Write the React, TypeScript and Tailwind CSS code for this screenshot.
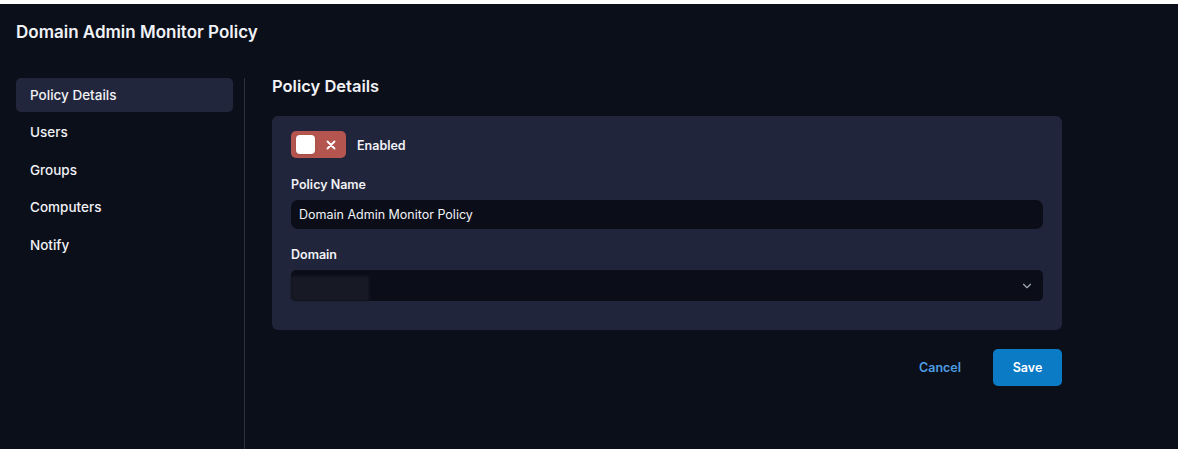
import { ChevronDown } from "lucide-react";

const navItems = ["Policy Details", "Users", "Groups", "Computers", "Notify"];

export default function App() {
  return (
    <div
      className="h-[449px] w-[1178px] overflow-hidden bg-white pt-[4px]"
      style={{ fontFamily: "Inter, 'Noto Sans', sans-serif" }}
    >
      <div className="flex h-[445px] flex-col bg-[#0b0f1a] text-[#f1f2f6]">
        {/* HEADER */}
        <h1 className="px-4 pt-[17px] text-[17px] font-semibold leading-[22px]">
          Domain Admin Monitor Policy
        </h1>

        <div className="mt-[35px] flex flex-1">
          {/* SIDEBAR */}
          <nav className="flex w-[245px] flex-col gap-[3.5px] border-r border-[#2e3240] pl-4 pr-[11px]">
            {navItems.map((item, idx) => (
              <div
                key={item}
                className={
                  "flex h-[34px] items-center rounded-[5px] px-[14px] text-[13.5px] font-medium " +
                  (idx === 0 ? "bg-[#22263c]" : "")
                }
              >
                {item}
              </div>
            ))}
          </nav>

          {/* MAIN */}
          <main className="w-[817px] pl-[27px]">
            <h2 className="text-[16.5px] font-semibold leading-[17px]">
              Policy Details
            </h2>

            <section className="mt-[21px] rounded-[6px] bg-[#21253b] px-[19px] pb-[29px] pt-[15px]">
              <div className="flex items-center gap-[11px]">
                <div className="flex h-[27px] w-[55px] items-center rounded-[5px] bg-[#b5554f] pl-[5px]">
                  <div className="h-[19px] w-[19px] rounded-[4px] bg-white shadow" />
                  <svg
                    className="ml-[11px]"
                    width="10"
                    height="10"
                    viewBox="0 0 10 10"
                    fill="none"
                    stroke="white"
                    strokeWidth="1.8"
                    strokeLinecap="round"
                  >
                    <path d="M1.5 1.5l7 7M8.5 1.5l-7 7" />
                  </svg>
                </div>
                <span className="pt-[3px] text-[12.5px] font-semibold">Enabled</span>
              </div>

              <label className="mt-[19px] block text-[12.5px] font-semibold leading-[15px]">
                Policy Name
              </label>
              <div className="mt-[8px] flex h-[29px] items-center rounded-[7px] bg-[#0b0e19] px-[8px] pt-[1px] text-[12.5px]">
                Domain Admin Monitor Policy
              </div>

              <label className="mt-[18px] block text-[12.5px] font-semibold leading-[15px]">
                Domain
              </label>
              <div className="mt-[8px] flex h-[31px] items-end justify-between rounded-[5px] bg-[#0b0e19]">
                <div className="h-[25px] w-[78px] rounded-bl-[5px] bg-[#171a24] blur-[1px]" />
                <ChevronDown
                  className="mb-[8px] mr-[9px] text-[#a3a7b5]"
                  size={14}
                  strokeWidth={2}
                />
              </div>
            </section>

            <div className="mt-[19px] flex items-center justify-end gap-[32px]">
              <button className="pt-[2px] text-[12.5px] font-semibold text-[#4d9de3]">
                Cancel
              </button>
              <button className="h-[37px] w-[69px] rounded-[5px] bg-[#0b7bc6] pt-[2px] text-[12.5px] font-semibold text-white">
                Save
              </button>
            </div>
          </main>
        </div>
      </div>
    </div>
  );
}
